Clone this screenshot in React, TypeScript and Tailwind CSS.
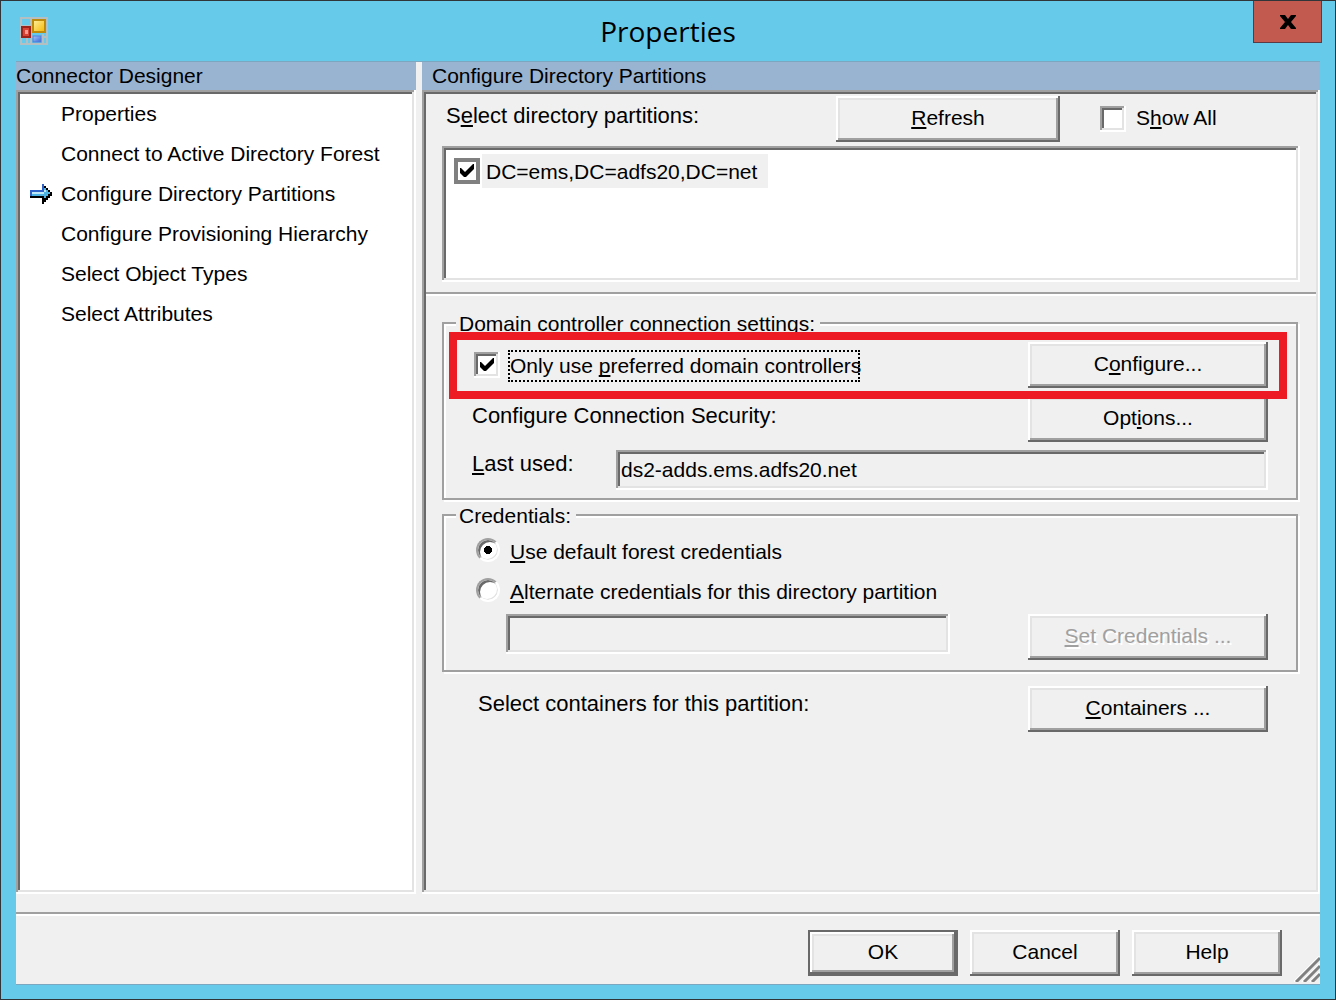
import React from 'react';

const SUNKEN =
  'shadow-[inset_-2px_-2px_0_#fff,inset_2px_2px_0_#a0a0a0,inset_-4px_-4px_0_#e3e3e3,inset_4px_4px_0_#696969]';
const RAISED =
  'shadow-[inset_-2px_-2px_0_#696969,inset_2px_2px_0_#fff,inset_-4px_-4px_0_#a0a0a0,inset_4px_4px_0_#e3e3e3]';
const RAISED_DEFAULT =
  'shadow-[inset_0_0_0_2px_#696969,inset_-4px_-4px_0_#696969,inset_4px_4px_0_#fff,inset_-6px_-6px_0_#a0a0a0,inset_6px_6px_0_#e3e3e3]';

const steps = [
  'Properties',
  'Connect to Active Directory Forest',
  'Configure Directory Partitions',
  'Configure Provisioning Hierarchy',
  'Select Object Types',
  'Select Attributes',
];
const currentStep = 2;

// Text with an optional access key, marked in the string as "&"
const Mnemonic: React.FC<{ text: string }> = ({ text }) => {
  const at = text.indexOf('&');
  if (at < 0) return <>{text}</>;
  return (
    <span className="whitespace-pre">
      {text.slice(0, at)}
      <u className="decoration-2 underline-offset-2 [text-decoration-skip-ink:none]">{text[at + 1]}</u>
      {text.slice(at + 2)}
    </span>
  );
};

interface ButtonProps {
  text: string;
  width: string;
  disabled?: boolean;
  primary?: boolean;
}

const Button: React.FC<ButtonProps> = ({ text, width, disabled, primary }) => (
  <button
    type="button"
    disabled={disabled}
    className={`h-[46px] shrink-0 bg-[#f0f0f0] pb-[2px] disabled:text-[#a0a0a0] disabled:[text-shadow:2px_2px_0_#fff] ${width} ${
      primary ? RAISED_DEFAULT : RAISED
    }`}
  >
    <Mnemonic text={text} />
  </button>
);

interface CheckboxProps {
  id: string;
  checked?: boolean;
  flat?: boolean;
}

const Checkbox: React.FC<CheckboxProps> = ({ id, checked, flat }) => (
  <span className="grid size-[26px] shrink-0 place-items-center">
    <input
      id={id}
      type="checkbox"
      defaultChecked={checked}
      className={`peer col-start-1 row-start-1 size-[26px] appearance-none bg-white outline-none ${
        flat ? 'border-4 border-[#808080]' : SUNKEN
      }`}
    />
    <svg
      viewBox="0 0 14 14"
      className="pointer-events-none col-start-1 row-start-1 hidden size-[14px] peer-checked:block"
    >
      <path d="M0 4h1l4 4 8-8h1v5l-8 8H4L0 9z" />
    </svg>
  </span>
);

const Radio: React.FC<{ id: string; checked?: boolean }> = ({ id, checked }) => (
  <span className="grid size-6 shrink-0 place-items-center">
    <input
      id={id}
      type="radio"
      name="credentials"
      defaultChecked={checked}
      className="peer col-start-1 row-start-1 size-6 appearance-none rounded-full border-2 border-t-[#a0a0a0] border-r-white border-b-white border-l-[#a0a0a0] bg-white shadow-[inset_2px_2px_0_#696969,inset_-1px_-1px_0_#e3e3e3] outline-none"
    />
    <svg
      viewBox="0 0 8 8"
      className="pointer-events-none col-start-1 row-start-1 hidden size-2 peer-checked:block"
    >
      <path d="M2 0h4v1h1v1h1v4H7v1H6v1H2V7H1V6H0V2h1V1h1z" />
    </svg>
  </span>
);

interface GroupProps {
  title: string;
  className: string;
  children: React.ReactNode;
}

const Group: React.FC<GroupProps> = ({ title, className, children }) => (
  <fieldset
    className={`mr-[18px] ml-4 border-2 border-[#a0a0a0] shadow-[inset_2px_2px_0_#fff,2px_2px_0_#fff] ${className}`}
  >
    <legend className="float-left -mt-3 ml-3 h-6 bg-[#f0f0f0] pr-[5px] pl-[3px]">{title}</legend>
    <div className="clear-both pt-[6px] pr-7 pl-[30px]">{children}</div>
  </fieldset>
);

const PaneTitle: React.FC<{ text: string; className: string }> = ({ text, className }) => (
  <h2 className={`h-7 bg-[#99b4d1] pt-[2px] ${className}`}>{text}</h2>
);

const AppIcon = () => (
  <svg viewBox="0 0 28 28" className="size-7">
    <defs>
      <linearGradient id="yellow" x1="0" y1="0" x2="1" y2="1">
        <stop offset="0" stopColor="#fff0a0" />
        <stop offset="1" stopColor="#f5b800" />
      </linearGradient>
      <linearGradient id="blue" x1="0" y1="0" x2="1" y2="1">
        <stop offset="0" stopColor="#a9c8fa" />
        <stop offset="1" stopColor="#3467d6" />
      </linearGradient>
    </defs>
    <path
      d="M1 1h26v26H1zM11 1v26M1 9h10M1 20h26M7 20v7M23 17v10"
      fill="none"
      stroke="#b5bfc2"
      strokeWidth="2"
    />
    <rect x="2" y="10" width="8" height="10" fill="#d94335" stroke="#9b211b" strokeWidth="2" />
    <rect x="5" y="13" width="3" height="4" fill="#f49a90" />
    <rect x="13" y="3" width="12" height="12" fill="url(#yellow)" stroke="#bd8a0a" strokeWidth="2" />
    <rect x="13" y="19" width="8" height="6" fill="url(#blue)" stroke="#517edb" />
  </svg>
);

const StepArrow = () => (
  <svg viewBox="0 0 11 10" className="size-full" shapeRendering="crispEdges">
    <path d="M6 0h1v1h1v1h1v1h1v1h1v2h-1v1H9v1H8v1H7v1H6V7H0V3h6z" fill="#000" />
    <path d="M0 3h6V0h1v2h1v1h1v1H7v1H1v1H0z" fill="#2f62c9" />
    <path d="M1 4h6V2h1v1h1v1h1v1H9v1H8v1H7V6H1z" fill="#4db4e4" />
    <path d="M1 4h6v1H1zM7 3h1v1H7z" fill="#bfe9f8" />
  </svg>
);

const TitleBar = () => (
  <header className="grid h-[60px] grid-cols-[1fr_auto_1fr] px-[13px]">
    <div className="pt-4 pl-[6px]">
      <AppIcon />
    </div>
    <h1 className="pt-3 font-['Open_Sans',sans-serif] text-[28px] leading-9">Properties</h1>
    <button
      type="button"
      aria-label="Close"
      className="grid h-[42px] w-[69px] place-items-center justify-self-end border border-t-0 border-[#5b3a45] bg-[#c35a50]"
    >
      <svg viewBox="0 0 16 14" className="h-[14px] w-4">
        <path d="M0 0h5l3 4 3-4h5v1l-5 6 5 6v1h-5l-3-4-3 4H0v-1l5-6-5-6z" />
      </svg>
    </button>
  </header>
);

const Sidebar = () => (
  <nav className="flex w-[400px] shrink-0 flex-col">
    <PaneTitle text="Connector Designer" className="" />
    <ul className={`flex-1 bg-white px-3 pt-3 ${SUNKEN}`}>
      {steps.map((step, i) => (
        <li key={step} className="flex h-10 items-start">
          <span className="mt-[2px] h-5 w-6 pl-[2px]">{i === currentStep && <StepArrow />}</span>
          <a href="#" className="pl-[9px]">
            {step}
          </a>
        </li>
      ))}
    </ul>
  </nav>
);

const PartitionPicker = () => (
  <section className="border-b-2 border-[#a0a0a0] pr-4 pb-[10px] pl-4 shadow-[0_2px_0_#fff]">
    <div className="flex pt-[2px]">
      <label htmlFor="partitions" className="flex-1 pt-2 pl-1 text-[22px]">
        <Mnemonic text="S&elect directory partitions:" />
      </label>
      <Button text="&Refresh" width="w-[224px]" />
      <div className="flex w-60 gap-[10px] pt-[10px] pl-10">
        <Checkbox id="show-all" />
        <label htmlFor="show-all">
          <Mnemonic text="S&how All" />
        </label>
      </div>
    </div>
    <div id="partitions" role="group" className={`mt-1 h-[136px] bg-white py-2 pl-3 ${SUNKEN}`}>
      <div className="flex items-center gap-[2px]">
        <Checkbox id="dc-ems" checked flat />
        <label htmlFor="dc-ems" className="h-[34px] w-[286px] bg-[#f0f0f0] pt-[6px] pl-1">
          DC=ems,DC=adfs20,DC=net
        </label>
      </div>
    </div>
  </section>
);

const ConnectionSettings = () => (
  <Group title="Domain controller connection settings:" className="mt-7 h-[178px]">
    <div className="relative flex h-[46px] items-start justify-between">
      <div className="flex gap-2 pt-2">
        <span className="pt-[2px]">
          <Checkbox id="preferred" checked />
        </span>
        <label
          htmlFor="preferred"
          className="h-8 w-[352px] border-2 border-dotted border-black pt-[2px] whitespace-nowrap"
        >
          <Mnemonic text="Only use &preferred domain controllers" />
        </label>
      </div>
      <Button text="C&onfigure..." width="w-60" />
      {/* highlight frame, laps over the group title and the row below */}
      <div className="pointer-events-none absolute -top-[10px] -right-[19px] -bottom-[11px] -left-[25px] border-8 border-[#ed1c24]" />
    </div>
    <div className="mt-2 -ml-[2px] flex justify-between">
      <p className="pt-2 text-[22px]">Configure Connection Security:</p>
      <Button text="Opt&ions..." width="w-60" />
    </div>
    <div className="mt-2 -ml-[2px] flex">
      <label htmlFor="last-used" className="w-36 pt-[2px] text-[22px]">
        <Mnemonic text="&Last used:" />
      </label>
      <input
        id="last-used"
        type="text"
        readOnly
        defaultValue="ds2-adds.ems.adfs20.net"
        className={`h-10 min-w-0 flex-1 bg-[#f0f0f0] pl-[5px] outline-none ${SUNKEN}`}
      />
    </div>
  </Group>
);

const Credentials = () => (
  <Group title="Credentials:" className="mt-[14px] h-[158px]">
    <div className="mt-1 flex gap-[10px] pl-[2px]">
      <Radio id="cred-default" checked />
      <label htmlFor="cred-default" className="pt-[2px]">
        <Mnemonic text="&Use default forest credentials" />
      </label>
    </div>
    <div className="mt-[14px] flex gap-[10px] pl-[2px]">
      <Radio id="cred-alternate" />
      <label htmlFor="cred-alternate" className="pt-[2px]">
        <Mnemonic text="&Alternate credentials for this directory partition" />
      </label>
    </div>
    <div className="mt-[10px] flex items-start justify-between pl-8">
      <input
        type="text"
        disabled
        aria-label="Alternate credentials"
        className={`h-10 w-[444px] bg-[#f0f0f0] pl-[5px] ${SUNKEN}`}
      />
      <Button text="&Set Credentials ..." width="w-60" disabled />
    </div>
  </Group>
);

const ResizeGrip = () => (
  <svg viewBox="0 0 26 26" className="size-[26px]">
    <path d="M0 26 26 0M8 26 26 8M16 26l10-10" stroke="#fff" strokeWidth="2" />
    <path d="M2 26 26 2M10 26l16-16M18 26l8-8" stroke="#808080" strokeWidth="3" />
  </svg>
);

export default function App() {
  return (
    <div className="flex min-h-screen flex-col border border-[#30353a] bg-[#66caea] font-['Liberation_Sans',Arial,sans-serif] text-[21px] leading-6 text-black">
      <TitleBar />
      <main className="mx-[15px] mb-[14px] flex flex-1 flex-col border-t border-b border-[#7ba7c0] bg-[#f0f0f0]">
        <div className="flex flex-1 gap-[6px]">
          <Sidebar />
          <div className="flex min-w-0 flex-1 flex-col">
            <PaneTitle text="Configure Directory Partitions" className="pl-[10px]" />
            <div className={`flex-1 p-1 ${SUNKEN}`}>
              <PartitionPicker />
              <ConnectionSettings />
              <Credentials />
              <div className="mt-[14px] flex justify-between pr-12 pl-[52px]">
                <p className="pt-[6px] text-[22px]">Select containers for this partition:</p>
                <Button text="&Containers ..." width="w-60" />
              </div>
            </div>
          </div>
        </div>
        <footer className="mt-[18px] flex h-[72px] justify-end gap-3 border-t-2 border-[#a0a0a0] pt-4 shadow-[inset_0_2px_0_#fff]">
          <Button text="OK" width="w-[150px]" primary />
          <Button text="Cancel" width="w-[150px]" />
          <Button text="Help" width="w-[150px]" />
          <div className="self-end pb-[2px]">
            <ResizeGrip />
          </div>
        </footer>
      </main>
    </div>
  );
}
